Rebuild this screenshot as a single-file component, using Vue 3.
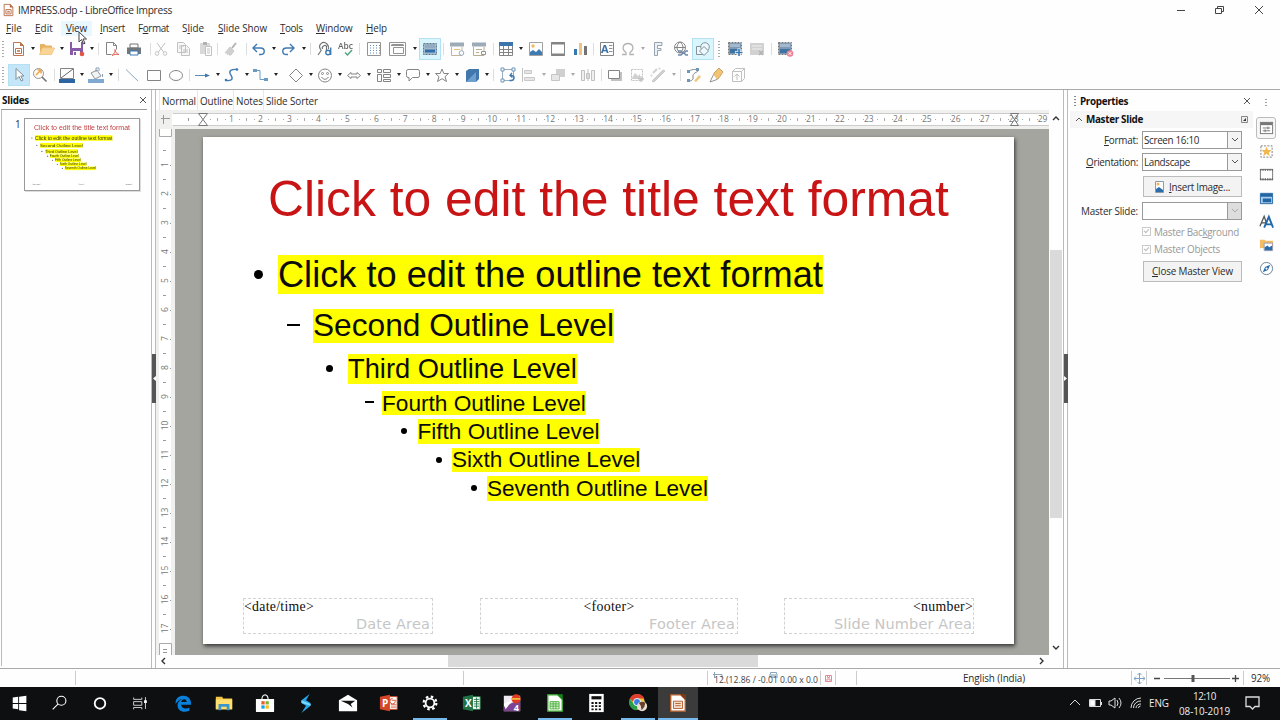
<script setup>
// Fits a text run to a width, by font size (.size) or by letter spacing.
const vFit = {
  mounted(el, { value, modifiers }) {
    const natural = el.getBoundingClientRect().width
    if (!natural) return
    const cs = getComputedStyle(el)
    if (modifiers.size) {
      el.style.fontSize = (parseFloat(cs.fontSize) * value) / natural + 'px'
    } else {
      el.style.letterSpacing = (value - natural) / el.textContent.length + 'px'
    }
  },
}

const menus = [
  ['F', 'ile', 6, 16, ''], ['E', 'dit', 35, 18, ''], ['V', 'iew', 66, 21, ''], ['I', 'nsert', 100, 25, ''],
  ['o', 'rmat', 138, 31, 'F'], ['l', 'ide', 182, 22, 'S'], ['S', 'lide Show', 218, 49, ''],
  ['T', 'ools', 280, 22.500, ''], ['W', 'indow', 316, 36.500, ''], ['H', 'elp', 366, 21, ''],
].map(([key, rest, x, w, pre]) => ({ key, rest, x, w, pre }))

const G = 'stroke="#777" fill="none"'
const L = 'stroke="#bbb" fill="none"'
const B = 'stroke="#2b6cab" fill="none" stroke-width="1.4"'
const screen = (c, d) => `<path d="M3 3h12v11H3z" fill="${d}" stroke="none"/><path d="M2.500 2.500h13v12h-13z" fill="none" stroke="#666" stroke-dasharray="2 1"/><path d="M4 4h10v3H4z" fill="#9db2c6"/><path d="M4 9h10v4H4z" fill="${c}"/>`
const icons = {
  doc: `<path d="M4.500 2.500h7l3 3v10h-10z" fill="#fff" stroke="#b5673f"/><path d="M11 2l4 4h-4z" fill="#b5673f"/><path d="M6.500 8.500h6v5h-6z" fill="none" stroke="#b5673f"/><path d="M8 10h3v2H8z" fill="#c98562"/>`,
  open: `<path d="M2.500 14V4.500h4l1 1.500h6v3" fill="#e9a94f" stroke="#e3a953"/><path d="M1.500 14.500L4.500 8h12l-3 6.500z" fill="#f9d08c" stroke="#f3c47a"/>`,
  save: `<path d="M2 2h13v13H2z" fill="#7b4a9c"/><path d="M4 2h9v6H4zM5 11h7v4H5z" fill="#fff"/><path d="M6 12h2v3H6z" fill="#7b4a9c"/><circle cx="14" cy="14" r="2.300" fill="#e0452f"/>`,
  pdf: `<path d="M3.500 14.500v-12h7l3 3v4M10.500 2.500v3h3M3.500 14.500h5" ${G}/><path d="M9 15.500c2.500-2 3.500-4 3-6 .5 3 2 4.500 4 5-3-.5-5 0-7 1z" fill="none" stroke="#d8513f"/>`,
  print: `<path d="M5 4h8v4H5z" fill="#fff" stroke="#666"/><path d="M2 7.500h14V14H2z" fill="#626a70"/><path d="M5 11h8v4H5z" fill="#fff" stroke="#2b6cab"/>`,
  cut: `<path d="M5 3l6.500 9M13 3L6.500 12" ${L}/><circle cx="5" cy="13.500" r="1.800" ${L}/><circle cx="13" cy="13.500" r="1.800" ${L}/>`,
  copy: `<path d="M3.500 2.500h6l2 2v8h-8zM7.500 5.500h5l3 3v7h-8z" stroke="#bbb" fill="#f7f7f7"/><path d="M5 6h5M9 10h5M9 12h5M5 8h2" ${L}/>`,
  paste: `<path d="M3 3h10v11H3z" fill="#d6d6d6"/><path d="M6 2h4v3H6z" fill="#aaa"/><path d="M8.500 6.500h6v9h-6zM10 9h3M10 11h3M10 13h3" stroke="#bbb" fill="#fff"/>`,
  brush: `<path d="M14 3l-4 5" stroke="#aaa" stroke-width="2"/><path d="M8 7l4 4-3 4H7l.5-2-2.500 1.500.5-2-2.500.5z" fill="#ccc" stroke="#c4c4c4"/>`,
  undo: `<path d="M7 4L3 8l4 4M3 8h7.500c5 0 5 6.500 0 6.500H9" ${B}/>`,
  redo: `<path d="M11 4l4 4-4 4M15 8H7.500c-5 0-5 6.500 0 6.500H9" ${B}/>`,
  find: `<path d="M5 10C1 5 7 0 11 4c2 2 2 3 1.500 5M6.500 9c-1-3 3-5 4.500-2M10.500 6v5M5.500 10L2 15" stroke="#666" fill="none" stroke-width="1.200"/><circle cx="12" cy="12.500" r="2.200" ${B}/><path d="M14.700 7.500V15" ${B}/>`,
  spell: `<text x="1" y="9" font-size="8.500" font-family="Open Sans" font-weight="600" fill="#555" textLength="15" lengthAdjust="spacingAndGlyphs">Abc</text><path d="M8 12.500l2.500 2.500L15 10" fill="none" stroke="#3d9b72" stroke-width="1.500"/>`,
  grid: `<path d="M2.500 2.500h13v13h-13z" stroke="#888" fill="none"/><path d="M5 5.500h10M5 8h10M5 10.500h10M5 13h10" stroke="#4e83b3" stroke-dasharray="1 2"/>`,
  display: `<path d="M.5 2.500h16v13H.5zM2.500 4.500h12M4.500 7.500h10v6h-10z" stroke="#888" fill="none"/><path d="M2 5.500h13" stroke="#888"/>`,
  master: `<path d="M2.500 3.500h13v11h-13z" fill="#9fb3c5" stroke="#536d85" stroke-dasharray="2 1"/><path d="M4 4h10v4H4z" fill="#8ba4bb"/><path d="M4 9.500h10v3H4z" fill="#1d5fa5"/>`,
  header: `<path d="M2 2.500h14v4H2z" fill="#93a3b0"/><path d="M3.500 7v8.500H14V7" stroke="#b8ad9b" fill="none"/><path d="M6 9.500h6" stroke="#e8b768"/><circle cx="13.500" cy="13" r="2.300" stroke="#8aa3b8" fill="#fff"/>`,
  notes: `<path d="M2 2.500h14v4H2z" fill="#93a3b0"/><path d="M3.500 7v8.500H14V7M6 9.500h6M6 12.500h3" stroke="#b3a486" fill="none"/><path d="M11.500 11.500h4v3h-4z" fill="#fff" stroke="#888"/>`,
  table: `<path d="M2.500 3.500h13v12h-13zM2.500 9.500h13M2.500 12.500h13M6.500 4v11M11.500 4v11" ${G}/><path d="M2 2h14v4H2z" fill="#2667a4"/>`,
  image: `<path d="M2.500 2.500h13v13h-13z" stroke="#999" fill="#fff"/><circle cx="6" cy="6" r="1.700" fill="#f4b350"/><path d="M3 15v-3l3-2 3 2 3-3 3 3v3z" fill="#2b6cab"/>`,
  av: `<path d="M2.500 2.500h13v13h-13z" ${G}/><path d="M2 3.500h14M2 14.500h14" stroke="#777" stroke-width="2"/>`,
  chart: `<path d="M3 9h3v6H3z" fill="#236aa9"/><path d="M8 3h3v12H8z" fill="#edbd73"/><path d="M13 6h3v9h-3z" fill="#666"/>`,
  textbox: `<path d="M2.500 2.500h13v13h-13z" ${G}/><text x="3" y="12.500" font-size="11" font-weight="700" font-family="Open Sans" fill="#2463a2">A</text><path d="M11 5.500h3.500M11 8.500h3.500M11 11.500h3.500" stroke="#888"/>`,
  omega: `<path d="M3 14.500h4v-2C2 9 4 3.500 9 3.500s7 5.500 2 9v2h4" stroke="#aaa" fill="none" stroke-width="1.300"/>`,
  font: `<path d="M5.500 15.500v-13H13v3H8.500v3H12v2H8.500v5z" stroke="#8d9ba7" fill="#e8eff4"/>`,
  link: `<circle cx="8" cy="7.500" r="5.500" ${G}/><path d="M2.500 7.500h11M8 2c-4 3-4 8 0 11 4-3 4-8 0-11" ${G}/><path d="M6 11h3l2 2-2 2H6M16 11h-2l-2 2 2 2h2" stroke="#5c7ca0" fill="none" stroke-width="1.500"/>`,
  shapes: `<path d="M2.500 6.500h8v8h-8z" stroke="#7c888f" fill="#eefaff"/><circle cx="11" cy="7" r="4.300" stroke="#7c888f" fill="#eefaff"/><path d="M10 6.500l4.500 4.500-4.500 4.500L5.500 11z" stroke="#7c888f" fill="#eefaff"/>`,
  newmaster: screen('#2a639a', '#6f90ae') + `<path d="M13 8.500v8M9 12.500h8" stroke="#fff" stroke-width="3"/><path d="M13 9v7M9.500 12.500h7" stroke="#236aa9" stroke-width="1.600"/>`,
  delmaster: `<path d="M2 3h14v12H2z" fill="#cdcdcd"/><path d="M4 6h10M4 9h10" stroke="#eee"/><path d="M11 11l4 4m0-4l-4 4" stroke="#aaa" stroke-width="1.500"/>`,
  closemaster: screen('#2a639a', '#6f90ae') + `<circle cx="14" cy="13.500" r="3.300" fill="#e9768b"/><path d="M12.700 12.200l2.600 2.600m0-2.600l-2.600 2.600" stroke="#fff"/>`,
  select: `<path d="M6 2.500v11l3-3 2.300 4.500 1.700-.8-2.200-4.200H14z" fill="#fff" stroke="#7a858d"/>`,
  zoom: `<circle cx="7.500" cy="7.500" r="5" stroke="#888" fill="#fffaf2"/><path d="M11 11l4.500 4.500" stroke="#666" stroke-width="1.600"/><path d="M5 9l5-5M6.500 4H10v3.500" stroke="#ea9d39" fill="none" stroke-width="1.500"/>`,
  linecolor: `<path d="M2.500 2.500h13v10h-13z" ${G}/><path d="M3 12L15 3" stroke="#555"/><path d="M1 13h16v4H1z" fill="#17559b"/>`,
  fill: `<path d="M4 7l6-3 4 6-6 3z" stroke="#888" fill="#eef3f7"/><path d="M9 6V2h3v3M15.500 8v3" stroke="#7896b0" fill="none"/><path d="M1 13h16v4H1z" fill="#729fcf"/>`,
  line: `<path d="M3 3.500l12 11.500" stroke="#7a9fbd"/>`,
  rect: `<path d="M2.500 4.500h13v10h-13z" ${G}/>`,
  ellipse: `<ellipse cx="9" cy="9.500" rx="6.500" ry="5" ${G}/>`,
  arrowline: `<path d="M1 9.500h11" stroke="#4a84b3"/><path d="M11 7.500l5 2-5 2z" fill="#276aa6"/>`,
  curve: `<path d="M3 14.500c10 1 5-5 4-7-1-3 2-4.500 7-4" ${B}/><circle cx="3" cy="14" r="1.300" fill="#2b6cab"/><circle cx="14" cy="3.500" r="1.300" fill="#2b6cab"/>`,
  connector: `<path d="M3 4.500h5v9h6" stroke="#5b91bf" fill="none"/><path d="M1 3h4v3H1zM12 12h4v3h-4z" fill="#5b91bf"/>`,
  diamond: `<path d="M9 3l6.500 6.500L9 16 2.500 9.500z" ${G}/>`,
  smile: `<circle cx="9" cy="9.500" r="6.500" ${G}/><path d="M5.500 11c2 3 5 3 7 0" ${G}/><circle cx="6.500" cy="7.500" r="1" ${G}/><circle cx="11.500" cy="7.500" r="1" ${G}/>`,
  dbl: `<path d="M2.500 9.500l3.500-3v1.500h6V6.500l3.500 3-3.500 3V11H6v1.500z" ${G}/>`,
  flow: `<path d="M2.500 3.500h4v3h-4zM8.500 3.500h7v3h-7zM2.500 8.500h4v7h-4zM8.500 8.500h7v3h-7zM8.500 13.500h7v2h-7z" ${G}/>`,
  callout: `<path d="M4 3.500h10q1.500 0 1.500 2v4q0 2-1.500 2H8.500L5 15v-3.500H4q-1.500 0-1.500-2v-4q0-2 1.500-2z" ${G}/>`,
  star: `<path d="M9 3l1.800 4.500h4.700L12 10.700l1.500 4.800L9 12.700l-4.500 2.800L6 10.700 2.500 7.500h4.700z" ${G}/>`,
  cube: `<path d="M3 5l3-2h10v10l-3 3H3z" fill="#2d69a5"/><path d="M13 6v10H3z" fill="#75a9dc" opacity=".7"/>`,
  rotate: `<path d="M3.500 3.500h11v11h-11z" stroke="#8aa6bb" fill="none"/><path d="M2 2h3v3H2zM13 2h3v3h-3zM2 13h3v3H2z" fill="#fff" stroke="#5c8db4"/><path d="M10.500 14.500h2c4-1 3-6-1-5M13 7l-2 2.500 2.500 2" ${B}/>`,
  align: `<path d="M2.500 2v14" ${L}/><path d="M4.500 4.500h7v3h-7zM4.500 11.500h10v3h-10z" fill="#e4e4e4" stroke="#c4c4c4"/>`,
  arrange: `<path d="M7 3h9v8H7z" fill="#ccc"/><path d="M2.500 8.500h8v6h-8z" fill="#e4e4e4" stroke="#c0c0c0"/>`,
  distribute: `<path d="M2.500 4.500h3v10h-3zM12.500 4.500h3v10h-3zM7.500 7.500h3v5h-3z" fill="#eee" stroke="#bbb"/><path d="M9 3v12" ${L}/>`,
  shadow: `<path d="M5 6h11v9H5z" fill="#bbb"/><path d="M2.500 4.500h11v8h-11z" fill="#fff" stroke="#777"/>`,
  crop: `<path d="M3.500 3.500h11v11h-11z" fill="none" stroke="#bbb" stroke-dasharray="2 1"/><path d="M4 12l3-5 3 3 2-2v5H4z" fill="#ccc"/><path d="M13 10v6M10 13h6" stroke="#aaa"/>`,
  filter: `<path d="M3 15L14 4l2 1L5 16z" fill="#ccc" stroke="#c4c4c4"/><path d="M4 7l4-4M2 10l1-1M10 3l1-1" stroke="#ccc" stroke-width="2"/>`,
  points: `<path d="M4 5c3-2 9-2 9 0 0 1-6 2-5 6 1 3-3 5-5 3" stroke="#777" fill="none"/><path d="M2 4h3v3H2zM11 2h3v3h-3zM2 13h3v3H2z" fill="#5c8db4"/><path d="M9 15l5-6 2 2-5 5z" fill="#efc070"/>`,
  glue: `<path d="M7 7l5-5 4 4-5 7-5 1z" fill="#f2bd66" stroke="#c39b5e"/><path d="M6.500 8.500L3 16l7-2.500" stroke="#888" fill="#fff"/>`,
  extrude: `<path d="M3.500 5.500h9v10h-9zM3.500 5.500l3-3h9v10l-3 3M12.500 5.500l3-3M8 14V8M5.500 10.500L8 8l2.500 2.500" ${L}/>`,
}

// Turns centre positions into flow margins.
const strip = (text) => {
  let end = 0
  return text.trim().split(/\s+/).map((t) => {
    const [name, pos, flag] = t.split(':')
    const width = { arr: 7, arrg: 7, sep: 1, handle: 3 }[name] || (flag ? 22 : 18)
    const left = +pos - width / 2
    const item = { name, on: !!flag, gap: left - end }
    end = left + width
    return item
  })
}
const rows = [
  strip('handle:3.500 doc:18 arr:33 open:47 arr:62 save:77 arr:92 sep:98.500 pdf:112 print:134 sep:150.500 cut:161 copy:183 paste:206 sep:217.500 brush:231 sep:246.500 undo:259 arr:274 redo:288 arr:304 sep:310.500 find:325 spell:346 sep:359.500 grid:374 display:398 arr:415 master:430:1 sep:443.500 header:457 notes:479 sep:493.500 table:506 arr:521 image:536 av:558 chart:580 sep:593.500 textbox:607 omega:628 arrg:643 font:658 link:681 shapes:703:1 handle:719.500 newmaster:735 delmaster:757 sep:771.500 closemaster:785'),
  strip('handle:3.500 select:19:1 zoom:40 sep:54.500 linecolor:67 arr:82 fill:96 arr:111 sep:118.500 line:132 rect:154 ellipse:176 sep:189.500 arrowline:203 arr:218 curve:232 arr:247 connector:261 arr:276 diamond:296 arr:311 smile:325 arr:340 dbl:354 arr:369 flow:384 arr:399 callout:413 arr:428 star:442 arr:457 cube:472 arr:487 sep:493.500 rotate:508 align:529 arrg:544 arrange:558 arrg:573 distribute:588 sep:601.500 shadow:615 crop:637 filter:658 arrg:674 sep:680.500 points:694 glue:716 extrude:738'),
]

const tabs = [['Normal', 162, 34], ['Outline', 200, 33], ['Notes', 236, 27], ['Slide Sorter', 266, 52]]

const outline = [
  { t: 'Click to edit the outline text format', x: 278, w: 545, y: 255, h: 39, dot: 9, mx: 258.500 },
  { t: 'Second Outline Level', x: 313, w: 301, y: 309, h: 34, dash: 13, mx: 293.500, up: 2 },
  { t: 'Third Outline Level', x: 348, w: 229, y: 354, h: 30, dot: 7, mx: 329.500 },
  { t: 'Fourth Outline Level', x: 382, w: 204, y: 391, h: 24, dash: 9, mx: 369.500 },
  { t: 'Fifth Outline Level', x: 417.500, w: 182, y: 419, h: 25, dot: 6, mx: 404 },
  { t: 'Sixth Outline Level', x: 452, w: 188.500, y: 448, h: 24, dot: 6, mx: 438.500 },
  { t: 'Seventh Outline Level', x: 487, w: 221, y: 476, h: 25, dot: 6, mx: 473.500 },
]
const lines = outline.map((o, i) => {
  const m = o.dot || o.dash
  const prev = i ? outline[i - 1].y + outline[i - 1].h : 221
  return { ...o, m, top: o.y - prev, left: o.mx - m / 2 - 203, gap: o.x - o.mx - m / 2 }
})

const side = [
  `<rect x="1.500" y="2.500" width="13" height="12" fill="#fff" stroke="#777"/><path d="M2 4h12" stroke="#777" stroke-width="3"/><path d="M4 8.500h8M4 11.500h8M9.500 7v3M6.500 10v3" stroke="#777"/>`,
  `<rect x="2" y="2" width="12" height="12" fill="none" stroke="#777" stroke-dasharray="2 1.500"/><path d="M8 3l1.500 3.500h4L10.500 9l1 4L8 10.500 4.500 13l1-4-3-2.500h4z" fill="#f2b74e"/>`,
  `<path d="M1.500 2.500h13v11h-13z" fill="#fff" stroke="#777"/><path d="M1 3h14M1 13h14" stroke="#666" stroke-width="2" stroke-dasharray="1.500 1"/>`,
  `<path d="M1.500 2.500h13v11h-13z" fill="#a9cdec" stroke="#2265a3"/><path d="M2 3h12v3H2zM4 8h9v4H4z" fill="#2265a3"/>`,
  `<path d="M1 13L5.500 2.500l3 9M3 9.500h5" stroke="#555" fill="none" stroke-width="1.400"/><path d="M5.500 14.500L10.500 3 15 14.500M7 11h6.500" stroke="#2268a8" fill="none" stroke-width="2"/>`,
  `<path d="M1 12V3h5l1 1h8v7z" fill="#f3bd68"/><path d="M5.500 6.500h9v8h-9z" fill="#fff" stroke="#99a"/><path d="M6 14v-3l3-2 2 2 3-2v5z" fill="#2b6cab"/>`,
  `<circle cx="8" cy="8" r="6.500" fill="#fff" stroke="#667f94"/><path d="M12 4L9.500 9.500 4 12l2.500-5.500z" fill="#236aa9"/><circle cx="8" cy="8" r="1.200" fill="#fff"/>`,
]

const apps = [
  { c: 20, s: `<path d="M3 5l6-1v7H3zM10 4l8-1v8h-8zM3 12h6v6l-6-1zM10 12h8v8l-8-1z" fill="#fff"/>` },
  { c: 60, s: `<circle cx="12.500" cy="8.500" r="5" fill="none" stroke="#fff" stroke-width="1.200"/><path d="M9 12l-6 6" stroke="#fff" stroke-width="1.200"/>` },
  { c: 100, s: `<circle cx="11" cy="11.500" r="5.800" fill="none" stroke="#fff" stroke-width="2"/>` },
  { c: 140, s: `<path d="M4 5v2h9V5M4 18v-2h9v2M4 9.500h9v4H4zM17 4.500v13" fill="none" stroke="#ddd"/><path d="M15.500 8h3v3h-3z" fill="#fff"/>` },
  { c: 183, s: `<path d="M3 12C2 6 7 2.500 12 3c5 0 8 4 8 10H9c0 4 5 5 9 3v3.500c-7 3-13 0-13-6C5 9 9 7 11 6.500 7 7 4.500 9 3 12zM9 10h6c0-4-5-4-6 0z" fill="#0880dc"/>` },
  { c: 224, s: `<path d="M2 4h7l1 2h10v12H2z" fill="#f4c542"/><path d="M2 7h18v11H2z" fill="#ffe06e"/><path d="M5 19v-7h12v7h-3v-4H8v4z" fill="#3b97cb"/>` },
  { c: 265, s: `<path d="M7.500 8c0-8 7-8 7 0" fill="none" stroke="#eee" stroke-width="1.300"/><path d="M1 6.500h20V20q0 1-1 1H2q-1 0-1-1z" fill="#fff"/><path d="M7 9h3.600v3.600H7z" fill="#f15b2a"/><path d="M11.600 9h3.600v3.600h-3.600z" fill="#7db72f"/><path d="M7 13.600h3.600v3.600H7z" fill="#18a2e2"/><path d="M11.600 13.600h3.600v3.600h-3.600z" fill="#fbb916"/>` },
  { c: 306, s: `<path d="M15 1L6 8v3l5 3-5 8 10-8v-3l-5-3z" fill="#29a7ed"/><path d="M6 8l10 4v2L6 11z" fill="#7ad8fb"/>` },
  { c: 348, s: `<path d="M1 8l10-6 10 6v12H1z" fill="#fff"/><path d="M3 8.500h16l-5 3.500 2 4-5-4z" fill="#111"/>` },
  { c: 389, s: `<path d="M10 4h10v14H10z" fill="#fff" stroke="#d34726"/><path d="M14 8h5M13 13h6M13 15.500h6M15 6a3 3 0 1 0 3 3" stroke="#d34726" fill="none"/><path d="M1 4l11-2v18L1 18z" fill="#d34726"/><text x="3.300" y="15" font-size="11" font-weight="700" font-family="Open Sans" fill="#fff">P</text>` },
  { c: 430, run: 1, s: `<circle cx="11" cy="11" r="4.800" fill="none" stroke="#fff" stroke-width="2"/><circle cx="11" cy="11" r="7" fill="none" stroke="#fff" stroke-width="2.400" stroke-dasharray="2.750 2.750"/>` },
  { c: 472, s: `<path d="M11 4h9v14h-9z" fill="#fff" stroke="#217346"/><path d="M13 7h6M13 9.500h6M13 12h6M13 14.500h6M16 5v12" stroke="#217346"/><path d="M1 4l11-2v18L1 18z" fill="#217346"/><text x="3.300" y="15" font-size="11" font-weight="700" font-family="Open Sans" fill="#fff">X</text>` },
  { c: 512, s: `<path d="M2 3h18v17H2z" fill="#f1eaf4"/><path d="M2 20v-5L20 7v13z" fill="#7d4291"/><path d="M2 12l11-6-9 12z" fill="#fff"/><circle cx="15.500" cy="6.500" r="5" fill="#df3b20"/><path d="M11 6.500h9" stroke="#f8b33d" stroke-width="2"/><text x="13" y="20" font-size="10" font-weight="700" font-family="Open Sans" fill="#fff">4</text>` },
  { c: 555, run: 1, s: `<path d="M3 2h11l5 5v13H3z" fill="#fff" stroke="#3aa82f" stroke-width="1.500"/><path d="M13 1.300h6.500V8z" fill="#17851d"/><path d="M5.500 9.500h10v8h-10zM5.500 12h10M5.500 14.500h10M9 9.500v8M12 9.500v8" fill="#dbf0d4" stroke="#4ab239"/>` },
  { c: 596, s: `<path d="M3.500 1h16v20h-16z" fill="#fff"/><path d="M6 3.500h11v3.500H6z" fill="#111"/><path d="M6 11h11M6 14.500h11M6 18h11" stroke="#111" stroke-width="2" stroke-dasharray="2.400 1.600"/>` },
  { c: 638, run: 1, s: `<circle cx="10" cy="10" r="8.500" fill="#f4c72c"/><path d="M2 6a9 9 0 0 1 16 0h-8l-3 5z" fill="#e13d2f"/><path d="M2 6a9 9 0 0 0 7 13l3-6H7z" fill="#2a9d4b"/><circle cx="10" cy="10" r="4" fill="#397ee6" stroke="#fff"/><circle cx="15.500" cy="14.500" r="5.500" fill="#e9ddd4"/><path d="M12 11q4-3 7 0l-1 4-3 4-1-5z" fill="#69412b"/>` },
  { c: 678, run: 1, on: 1, s: `<path d="M3 2h11l5 5v13H3z" fill="#fff" stroke="#b15b27" stroke-width="1.500"/><path d="M13 1.300h6.500V8z" fill="#7f3c14"/><path d="M6 9h10v8H6z" fill="#f5dfd0" stroke="#b15b27"/><path d="M8 11.500h6M8 14h6" stroke="#b15b27"/>` },
]
let edge = 0
for (const a of apps) {
  a.w = a.on ? 40 : 34
  a.gap = a.c - a.w / 2 - edge
  edge = a.c + a.w / 2
}

const areas = [
  { cls: 'date', text: '<date/time>', tw: 70, label: 'Date Area', lw: 74 },
  { cls: 'foot', text: '<footer>', tw: 51, label: 'Footer Area', lw: 86 },
  { cls: 'num', text: '<number>', tw: 60, label: 'Slide Number Area', lw: 138 },
]
</script>

<template>
  <div class="window">
    <header class="titlebar">
      <svg class="appicon" viewBox="2 1 15 16" v-html="icons.doc"></svg>
      <span v-fit="154" class="t caption">IMPRESS.odp - LibreOffice Impress</span>
      <svg class="winbtns" width="100" height="18" fill="none" stroke="#444"><path d="M6 9.500h8M44.500 7.500h6v5h-6zM46.500 7.500v-2h6v5h-2M84 5l8 8M92 5l-8 8" /></svg>
    </header>
    <nav class="menubar">
      <div v-for="m in menus" :key="m.x" class="menu" :class="{ hover: m.key === 'V' }" :style="{ width: m.w + 'px', '--x': m.x + 'px' }">
        <span v-fit="m.w" class="t">{{ m.pre }}<u>{{ m.key }}</u>{{ m.rest }}</span>
      </div>
      <svg class="pointer" width="10" height="14" viewBox="0 0 10 14"><path d="M1 1v10l2.500-2.500L5.500 13l1.500-.7-2-4.300h3.500z" fill="#fff" stroke="#444" /></svg>
    </nav>
    <div v-for="(row, i) in rows" :key="i" class="toolbar">
      <div v-for="(it, k) in row" :key="k" class="tool" :class="[it.name, { on: it.on }]" :style="{ marginLeft: it.gap + 'px' }">
        <svg v-if="icons[it.name]" width="18" height="18" viewBox="0 0 18 18" v-html="icons[it.name]"></svg>
      </div>
    </div>

    <main class="work">
      <aside class="slides">
        <div class="slides-head"><b v-fit="27" class="t">Slides</b><svg width="8" height="8"><path d="M1 1l6 6M7 1L1 7" stroke="#555" /></svg></div>
        <div class="slides-list">
          <span class="num">1</span>
          <svg class="thumb" width="116" height="73" viewBox="0 0 116 73" font-family="Liberation Sans">
            <rect x=".5" y=".5" width="115" height="72" fill="#fff" stroke="#999" />
            <text x="10" y="12.300" font-size="7" fill="#c04040" textLength="96">Click to edit the title text format</text>
            <g v-for="o in outline" :key="o.t">
              <rect :x="(o.x - 203) * .1418 + .5" :y="(o.y - 137) * .1418 + .5" :width="o.w * .1418" :height="o.h * .1418" fill="#ff0" />
              <circle :cx="(o.mx - 203) * .1418" :cy="(o.y + o.h / 2 - 137) * .1418 + .5" r=".6" fill="#555" />
              <text :x="(o.x - 203) * .1418 + .5" :y="(o.y + o.h * .8 - 137) * .1418 + .5" :font-size="o.h * .1418 / 1.15" :textLength="o.w * .1418" lengthAdjust="spacingAndGlyphs" fill="#332">{{ o.t }}</text>
            </g>
            <g font-size="1.900" fill="#555" font-family="Liberation Serif"><text x="8" y="67">&lt;date/time&gt;</text><text x="54" y="67">&lt;footer&gt;</text><text x="101" y="67">&lt;number&gt;</text></g>
          </svg>
        </div>
      </aside>
      <div class="splitter"><svg width="4" height="49"><path d="M0 0h4v49H0z" fill="#555" /><path d="M4 22v5l-3-2.500z" fill="#fff" /></svg></div>

      <section class="editor">
        <div class="tabs">
          <div v-for="t in tabs" :key="t[0]" class="tab" :style="{ '--x': t[1] - 159 + 'px' }"><span v-fit="t[2]" class="t">{{ t[0] }}</span></div>
        </div>
        <div class="body">
          <div class="view">
            <svg class="hruler" width="893" height="19" font-family="Open Sans" font-size="8.500" fill="#777" text-anchor="middle">
              <rect width="893" height="19" fill="#f0f0ef" /><rect x="16" y="4" width="877" height="11" fill="#fff" />
              <path d="M17 3.500h876M17 15.500h876" stroke="#ccc" />
              <path d="M5 8.500h9M7.500 5v9" stroke="#999" />
              <g v-for="n in 29" :key="n"><text :x="46.500 + n * 28.970" y="12.200">{{ n }}</text><path :d="`M${47.500 + (n - 1) * 29 + 14} 8v3M${47.500 + (n - 1) * 29 + 7} 9v1M${47.500 + (n - 1) * 29 + 22} 9v1`" stroke="#aaa" /></g>
              <path d="M32.500 8v3" stroke="#999" />
              <path d="M42.500 3.500h9l-4.500 6zM42.500 15.500h9l-4.500-6zM854.500 3.500h8l-4 6zM854.500 15.500h8l-4-6z" fill="#fff" fill-opacity=".6" stroke="#777" />
            </svg>
            <div class="canvas-row">
              <svg class="vruler" width="19" height="526" font-family="Open Sans" font-size="8.500" fill="#777" text-anchor="middle">
                <rect width="19" height="526" fill="#f0f0ef" /><rect x="3" width="12" height="526" fill="#fff" />
                <path d="M3.500 0v7.500h12V0M3.500 526V514.500h12V526" fill="#fff" stroke="#aaa" />
                <g v-for="n in 17" :key="n"><text :transform="`translate(11.500 ${6.500 + n * 29}) rotate(-90)`">{{ n }}</text><path :d="`M7 ${n * 29 - 7.500}h3M14 ${n * 29 + 7.500}h1`" stroke="#999" /></g>
                <path d="M7 520.500h4M7 523.500h4" stroke="#999" />
              </svg>
              <div class="canvas">
                <article class="slide">
                  <h1><span v-fit.size="681">Click to edit the title text format</span></h1>
                  <div v-for="l in lines" :key="l.t" class="line" :style="{ marginTop: l.top + 'px', height: l.h + 'px', paddingLeft: l.left + 'px', lineHeight: l.h - (l.up || 0) + 'px' }">
                    <i :class="l.dot ? 'dot' : 'dash'" :style="{ width: l.m + 'px', marginRight: l.gap + 'px' }"></i>
                    <mark v-fit.size="l.w">{{ l.t }}</mark>
                  </div>
                  <footer class="areas">
                    <div v-for="a in areas" :key="a.cls" class="area" :class="a.cls">
                      <p class="field"><span v-fit="a.tw">{{ a.text }}</span></p>
                      <p class="label"><span v-fit="a.lw">{{ a.label }}</span></p>
                    </div>
                  </footer>
                </article>
              </div>
            </div>
          </div>
          <div class="vscroll"><svg width="8" height="6"><path d="M1 5l3-3 3 3" /></svg><div class="vthumb"></div><svg width="8" height="6"><path d="M1 1l3 3 3-3" /></svg></div>
        </div>
        <div class="hscroll"><svg width="6" height="8"><path d="M5 1L2 4l3 3" /></svg><div class="hthumb"></div><svg width="6" height="8"><path d="M1 1l3 3-3 3" /></svg></div>
      </section>
      <div class="splitter right"><svg width="4" height="49"><path d="M0 0h4v49H0z" fill="#555" /><path d="M0 22v5l3-2.500z" fill="#fff" /></svg></div>

      <aside class="props">
        <div class="props-head"><span class="grip"></span><b v-fit="48" class="t">Properties</b><svg width="8" height="8"><path d="M1 1l6 6M7 1L1 7" stroke="#555" /></svg></div>
        <div class="section-head"><svg width="8" height="6"><path d="M1 5l3-3 3 3" fill="none" stroke="#555" /></svg><b v-fit="57" class="t">Master Slide</b><svg width="7" height="7"><path d="M.5.5h6v6h-6z" fill="#eee" stroke="#888" /><path d="M5 2v3H2z" fill="#333" /></svg></div>
        <div class="form">
          <label><span v-fit="34" class="t"><u>F</u>ormat:</span></label>
          <div class="combo"><span v-fit="56" class="t">Screen 16:10</span><i><svg width="8" height="6"><path d="M1 1l3 3 3-3" /></svg></i></div>
          <label><span v-fit="52" class="t"><u>O</u>rientation:</span></label>
          <div class="combo"><span v-fit="47" class="t">Landscape</span><i><svg width="8" height="6"><path d="M1 1l3 3 3-3" /></svg></i></div>
          <span></span>
          <div class="btn"><svg width="9" height="12" viewBox="0 0 9 12"><path d="M.5.5h8v11h-8z" fill="#fff" stroke="#8a9aa8" /><circle cx="3" cy="3" r="1.500" fill="#f4b350" /><path d="M1 11V8l3-2 4 3v2z" fill="#2b6cab" /></svg><span v-fit="61" class="t"><u>I</u>nsert Image...</span></div>
          <label><span v-fit="57" class="t">Master Slide:</span></label>
          <div class="combo off"><span></span><i><svg width="8" height="6"><path d="M1 1l3 3 3-3" /></svg></i></div>
        </div>
        <div class="check"><i></i><span v-fit="85" class="t">Master Bac<u>k</u>ground</span></div>
        <div class="check"><i></i><span v-fit="66" class="t">Master Ob<u>j</u>ects</span></div>
        <div class="btn close"><span v-fit="81" class="t"><u>C</u>lose Master View</span></div>
      </aside>
      <aside class="deck">
        <svg class="dots" width="4" height="10"><path d="M1.500 1h1v1h-1zM1.500 4h1v1h-1zM1.500 7h1v1h-1z" fill="#444" /></svg>
        <div v-for="(s, i) in side" :key="i" class="deck-btn" :class="{ sel: i === 0 }"><svg width="16" height="16" viewBox="0 0 16 16" v-html="s"></svg></div>
      </aside>
    </main>

    <div class="status">
      <span class="s1"></span><span class="s2"></span><span class="s3"></span>
      <span class="s4"><svg width="112" height="16" font-family="Open Sans" font-size="9.800" fill="#444"><path d="M6.500 2v6M5 4.500h9v4M62.500 2.500h6v3h-6z" fill="none" stroke="#8aa4bb" /><path d="M61 4h9v4h-9z" fill="#b9cadb" /><text x="6" y="12.500" textLength="104" lengthAdjust="spacingAndGlyphs">12.(12.86 / -0.01 0.00 x 0.0</text></svg></span>
      <span class="s5"><svg width="7" height="7"><path d="M.5.5h6v6h-6zM2.500.5v2h2v-2M2 6V4h3v2" fill="#fff" stroke="#e28b96" /></svg></span><span class="s6"></span>
      <span class="s7"><span v-fit="62" class="t">English (India)</span></span>
      <span class="s8"><svg width="11" height="11"><path d="M5.500 0v11M0 5.500h11M3.500 2l2-2 2 2M3.500 9l2 2 2-2M2 3.500l-2 2 2 2M9 3.500l2 2-2 2" fill="none" stroke="#7aa2c5" /></svg></span>
      <span class="s9"><svg width="96" height="12"><path d="M7 6.500h6M85 6.500h7M88.500 3v7" stroke="#444" stroke-width="1.300" /><path d="M17 6.500h66" stroke="#777" /><path d="M44.500 3h3v7h-3z" fill="#555" /></svg></span>
      <span class="s10"><span v-fit="19" class="t">92%</span></span>
    </div>

    <div class="taskbar">
      <div v-for="a in apps" :key="a.c" class="app" :class="{ run: a.run, on: a.on }" :style="{ marginLeft: a.gap + 'px', width: a.w + 'px' }"><svg width="20" height="20" viewBox="0 0 22 22" v-html="a.s"></svg></div>
      <div class="tray">
        <svg width="74" height="18" fill="none" stroke="#ddd"><path d="M1 11l5-5 5 5M20.500 5.500h11v7h-11zM32.500 8v3" /><path d="M21 6h5v6h-5z" fill="#fff" /><path d="M40 7h2l4-3v10l-4-3h-2zM48 6q2 3 0 6M50 4q4 5 0 10M62 14A10 10 0 0 1 72 4M64.500 14a7 7 0 0 1 7.500-7M67 14a4.500 4.500 0 0 1 5-4M69.500 14a2 2 0 0 1 2-2" /></svg>
        <span v-fit="20" class="t eng">ENG</span>
        <div class="clock"><span v-fit="23" class="t">12:10</span><span v-fit="51" class="t">08-10-2019</span></div>
        <svg width="15" height="16" fill="none" stroke="#ddd" stroke-width="1.300"><path d="M1 2h13v9.500H10L7.500 14 5 11.500H1z" /></svg>
      </div>
    </div>
  </div>
</template>

<style>
body { margin: 0; overflow: hidden; }
</style>

<style scoped>
.window { width: 1280px; height: 720px; display: flex; flex-direction: column; background: #fefefe; color: #2c2c2c; font: 9.900px/14px "Open Sans", "Noto Sans", sans-serif; overflow: hidden; }
.t { display: inline-block; white-space: nowrap; }
u { text-decoration: underline; text-underline-offset: 1px; text-decoration-thickness: 1px; }
.titlebar { height: 20px; display: flex; align-items: center; }
.appicon { width: 13px; height: 14px; margin-left: 2px; margin-right: 3px; }
.caption { font-size: 10.200px; }
.winbtns { margin-left: auto; margin-right: 9px; }
.menubar { height: 18px; display: grid; position: relative; }
.menu { grid-area: 1 / 1; margin-left: var(--x); height: 15px; margin-top: 1px; line-height: 15px; white-space: nowrap; }
.menu.hover { box-shadow: 0 0 0 5px #e9f8ff; clip-path: inset(0 -6px); background: #e9f8ff; }
.pointer { position: absolute; left: 78px; top: 11px; z-index: 2; }
.toolbar { height: 22px; display: flex; align-items: center; padding-bottom: 1px; }
.toolbar + .toolbar { height: 28px; padding: 0; }
.tool { flex: none; display: flex; align-items: center; justify-content: center; height: 22px; width: 18px; }
.tool svg { flex: none; opacity: .9; }
.tool.on { width: 20px; height: 20px; background: #d9f5fd; border: 1px solid #b3e0f2; }
.tool.select.on { background: #c5e6f8; }
.tool.sep { width: 1px; height: 12px; background: #ddd; }
.tool.handle { width: 2px; margin-right: 1px; height: 16px; background: repeating-linear-gradient(#aaa 0 1px, transparent 1px 3px); }
.tool.arr, .tool.arrg { width: 7px; }
.tool.arr::before, .tool.arrg::before { content: ""; border: 2.500px solid transparent; border-top: 3px solid #222; border-bottom: 0; }
.tool.arrg::before { border-top-color: #aaa; }

.work { height: 579px; display: flex; border-top: 1px solid #aaa; border-bottom: 1px solid #aaa; }
.slides { width: 151px; display: flex; flex-direction: column; }
.slides-head { height: 18px; padding-top: 1px !important; display: flex; align-items: center; justify-content: space-between; padding: 0 4px 0 2px; color: #111; }
.slides-list { flex: 1; margin: 0 4px 2px 1px; border-top: 1px solid #999; border-left: 1px solid #bbb; display: flex; align-items: flex-start; }
.slides-list .num { margin: 7px 4px 0 13px; width: 5px; }
.thumb { margin-top: 8px; filter: drop-shadow(1px 1px 0 #ddd); }
.splitter { width: 3px; border-left: 1px solid #bbb; border-right: 1px solid #bbb; display: flex; align-items: center; }
.splitter svg { flex: none; }
.editor { width: 907px; display: flex; flex-direction: column; }
.tabs { height: 20px; display: grid; }
.tab { grid-area: 1 / 1; margin-left: var(--x); line-height: 22px; width: max-content; border-left: 1px solid #e8e8e8; padding-left: 2px; }
.body { height: 545px; display: flex; }
.view { width: 893px; }
.hruler, .vruler { display: block; flex: none; }
.canvas-row { display: flex; height: 526px; }
.canvas { width: 874px; background: #a4a59f; }
.slide { width: 811px; height: 507px; margin: 8px 0 0 28px; background: #fff; box-shadow: 1px 2px 4px #333; overflow: hidden; font-family: "Liberation Sans", Arial, sans-serif; color: #0c0c0c; }
h1 { margin: 0; height: 60px; padding: 24px 0 0 65px; font-weight: 400; font-size: 50px; line-height: 76px; color: #c91416; white-space: nowrap; }
h1 span { display: inline-block; }
.line { display: flex; align-items: center; box-sizing: border-box; white-space: nowrap; }
.line .dot { aspect-ratio: 1; border-radius: 50%; background: #000; }
.line .dash { height: 1.500px; margin-bottom: 2px; background: #000; }
mark { background: #ff0; font-size: 26px; color: #0c0c0c; height: 100%; }
.areas { display: flex; margin: 97px 0 0 40px; }
.area { height: 34px; border: 1px dashed #d2d2d2; }
.date { width: 188px; margin-right: 47px; }
.foot { width: 256px; margin-right: 46px; }
.area.num { width: 188px; }
.area p { margin: 0; height: 17px; line-height: 15px; }
.area span { display: inline-block; white-space: nowrap; }
.field { font: 13.800px "Liberation Serif", serif; }
.foot .field { text-align: center; }
.area.num .field { text-align: right; }
.label { text-align: right; padding-right: 2px; font: 14.500px "DejaVu Sans", sans-serif; color: #c6c6c6; }
.area .label { line-height: 17px; }
.area.num .label { padding-right: 1px; }
.vscroll { width: 14px; display: flex; flex-direction: column; align-items: center; }
.vscroll svg, .hscroll svg, .combo svg { fill: none; stroke: #333; stroke-width: 1.400; flex: none; }
.vscroll svg:first-child { margin-top: 5px; }
.vthumb { width: 12px; height: 268px; margin-top: 129px; margin-bottom: 127px; background: #dadada; }
.hscroll { height: 12px; display: flex; align-items: center; }
.hscroll svg:first-child { margin-left: 4px; }
.hthumb { width: 310px; height: 12px; margin-left: 282px; margin-right: 281px; background: #dadada; }
.props { width: 183px; padding-left: 2px; }
.props-head { height: 20px; padding-top: 1px; display: flex; align-items: center; color: #111; }
.grip { width: 2px; height: 10px; margin: 0 4px 0 4px; background: repeating-linear-gradient(#888 0 1px, transparent 1px 3px); }
.props-head svg { margin-left: 115px; }
.section-head { height: 17px; display: flex; align-items: center; padding-left: 5px; background: #f6f6f6; color: #111; margin-bottom: 1.500px; }
.section-head b { margin-left: 3px; }
.section-head svg:last-child { margin-left: auto; margin-right: 5px; }
.form { display: grid; grid-template-columns: 68px 100px; column-gap: 4px; grid-template-rows: 22px 22px 27px 22px; align-items: center; }
label { text-align: right; white-space: nowrap; }
.combo { width: 98px; height: 16px; border: 1px solid #999; display: flex; justify-content: space-between; align-items: center; text-indent: 1px; background: #fff; }
.combo i { width: 13px; height: 16px; border-left: 1px solid #999; display: flex; align-items: center; justify-content: center; background: #f4f4f4; }
.combo.off i { background: #ddd; }
.combo svg { stroke: #555; stroke-width: 1; }
.combo.off svg { stroke: #aaa; }
.btn { width: 97px; height: 19px; border: 1px solid #bbb; background: #f3f3f3; display: flex; align-items: center; justify-content: center; gap: 5px; }
.form .btn { margin-left: 1px; }
.check { height: 17.500px; display: flex; align-items: center; gap: 3px; color: #999; margin-left: 72px; }
.form + .check { margin-top: .5px; }
.check i { width: 7px; height: 7px; border: 1px solid #ccc; display: flex; }
.check i::after { content: ""; width: 4px; height: 2px; margin: 1px; border-left: 1px solid #bbb; border-bottom: 1px solid #bbb; transform: rotate(-45deg); }
.btn.close { margin: 3px 0 0 73px; }
.deck { width: 26px; display: flex; flex-direction: column; align-items: center; }
.dots { margin: 8px 0 9px; flex: none; }
.deck-btn { width: 20px; height: 22px; margin-bottom: 1.400px; display: flex; align-items: center; justify-content: center; box-sizing: border-box; flex: none; }
.deck-btn svg { width: 15px; height: 15px; flex: none; }
.deck-btn.sel { border: 1px solid #bbb; border-radius: 3px; background: #f7f7f7; }

.status { height: 18px; display: flex; align-items: center; }
.status > span { height: 14px; border-right: 1px solid #ccc; box-sizing: border-box; display: flex; align-items: center; justify-content: center; flex: none; }
.status .s1 { width: 76px; } .status .s2 { width: 388px; } .status .s3 { width: 244px; }
.status .s4 { width: 113px; justify-content: flex-start; } .status .s5 { width: 15px; } .status .s6 { width: 21px; }
.status .s7 { width: 275px; } .status .s8 { width: 15px; } .status .s9 { width: 97px; } .status .s10 { width: 33px; border: 0; }
.taskbar { height: 33px; display: flex; background: #0d0f10; }
.app { flex: none; height: 33px; box-sizing: border-box; display: flex; justify-content: center; align-items: center; }
.app.run { border-bottom: 2px solid #76b9ed; padding-top: 2px; }
.app.on { background: #3b3b3b; }
.tray { margin-left: auto; display: flex; align-items: center; color: #eee; padding-right: 20px; }
.eng { margin-left: 6px; margin-right: 10px; }
.clock { width: 51px; padding-top: 1px; margin-right: 15px; display: flex; flex-direction: column; align-items: center; line-height: 15px; }
</style>
